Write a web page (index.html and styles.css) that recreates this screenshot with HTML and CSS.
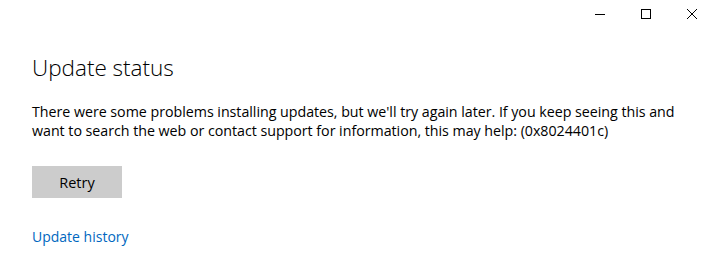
FILE: index.html
```html
<!DOCTYPE html>
<html lang="en">
<head>
<meta charset="utf-8">
<title>Update status</title>
<link rel="stylesheet" href="styles.css">
</head>
<body>
<div class="window">
  <header class="titlebar">
    <button class="ctl" aria-label="Minimize">
      <svg width="10" height="10" viewBox="0 0 10 10"><path d="M0 5.5H10" stroke="#000" stroke-width="1"/></svg>
    </button>
    <button class="ctl" aria-label="Maximize">
      <svg width="10" height="10" viewBox="0 0 10 10"><rect x="0.5" y="0.5" width="9" height="9" fill="none" stroke="#000" stroke-width="1"/></svg>
    </button>
    <button class="ctl" aria-label="Close">
      <svg width="10" height="10" viewBox="0 0 10 10"><path d="M0 0L10 10M10 0L0 10" stroke="#000" stroke-width="1"/></svg>
    </button>
  </header>
  <main class="content">
    <h1 class="title">Update status</h1>
    <p class="message">There were some problems installing updates, but we'll try again later. If you keep seeing this and want to search the web or contact support for information, this may help: (0x8024401c)</p>
    <button class="retry">Retry</button>
    <a class="link" href="#">Update history</a>
  </main>
</div>
</body>
</html>
```

FILE: styles.css
```css
html, body {
  margin: 0;
  padding: 0;
  background: #fff;
}
body {
  font-family: "Open Sans", "Noto Sans", "Liberation Sans", sans-serif;
  color: #000;
}
.window {
  width: 715px;
  height: 267px;
  display: flex;
  flex-direction: column;
}
.titlebar {
  display: flex;
  justify-content: flex-end;
  height: 32px;
  padding-right: 0;
}
.ctl {
  width: 46px;
  height: 28px;
  border: 0;
  background: transparent;
  padding: 0;
  display: flex;
  align-items: center;
  justify-content: center;
}
.content {
  padding: 0 32px;
  display: flex;
  flex-direction: column;
  align-items: flex-start;
}
.title {
  margin: 20px 0 0;
  font-size: 22.5px;
  font-weight: 300;
  line-height: 32px;
}
.message {
  margin: 18px 0 0;
  font-size: 14.25px;
  line-height: 19px;
  letter-spacing: -0.03px;
  max-width: 651px;
}
.retry {
  margin-top: 26px;
  width: 90px;
  height: 32px;
  border: 0;
  background: #cccccc;
  font-family: inherit;
  font-size: 14.5px;
  color: #000;
}
.link {
  margin-top: 29px;
  color: #0067c0;
  text-decoration: none;
  font-size: 14px;
  line-height: 20px;
}
```
